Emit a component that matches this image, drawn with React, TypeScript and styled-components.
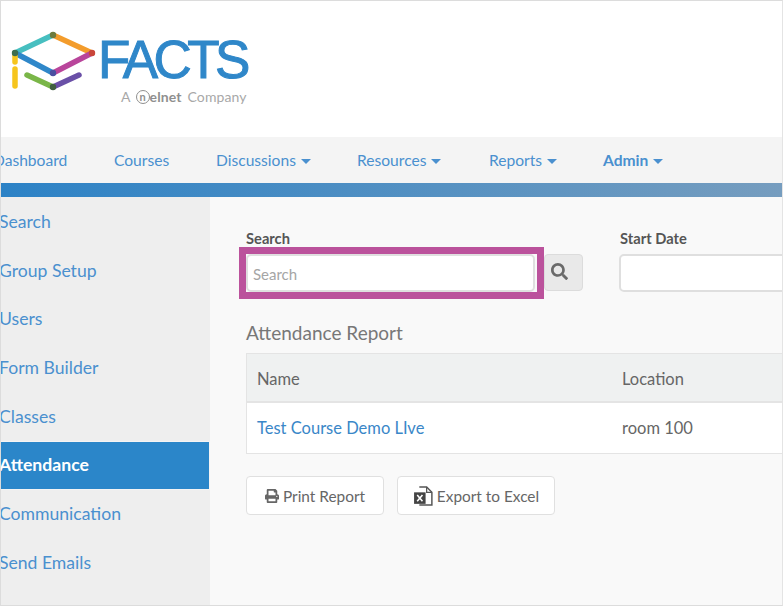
import React from 'react';
import styled, { createGlobalStyle } from 'styled-components';
import { FaPrint, FaSearch } from 'react-icons/fa';

const Global = createGlobalStyle`
  html, body {
    margin: 0;
    padding: 0;
    background: #fff;
  }
  * {
    box-sizing: border-box;
  }
`;

const Page = styled.div`
  width: 783px;
  height: 606px;
  overflow: hidden;
  display: flex;
  flex-direction: column;
  font-family: Lato, "Open Sans", sans-serif;
  border-top: 1px solid #dcdcdc;
  border-left: 1px solid #dcdcdc;
  border-right: 1px solid #e4e4e4;
  border-bottom: 1px solid #dcdcdc;
  color: #666;
`;

const LogoBar = styled.header`
  height: 136px;
  flex: none;
  background: #fff;
  display: flex;
  align-items: flex-start;
  padding: 29px 0 0 10px;
`;

const LogoMark = styled.svg`
  width: 88px;
  height: 60px;
  flex: none;
  margin-top: 1px;
`;

const LogoWords = styled.div`
  display: flex;
  flex-direction: column;
  margin-left: -1px;
`;

const Wordmark = styled.div`
  font-family: "Liberation Sans", Arial, sans-serif;
  font-size: 53px;
  line-height: 56px;
  height: 56px;
  letter-spacing: -4.6px;
  color: #2f87c9;
  -webkit-text-stroke: 1px #2f87c9;
  margin-top: 2px;
`;

const Tagline = styled.div`
  font-size: 14px;
  line-height: 18px;
  letter-spacing: 0.1px;
  color: #a8a8a8;
  display: flex;
  align-items: center;
  margin: 0 0 0 23px;
  white-space: nowrap;
`;

const NelnetBadge = styled.span`
  width: 14px;
  height: 14px;
  border: 1.5px solid #8f8f8f;
  border-radius: 50%;
  margin: 0 0 0 5px;
  font-size: 11px;
  line-height: 10px;
  font-weight: 700;
  color: #8f8f8f;
  display: flex;
  align-items: center;
  justify-content: center;
`;

const Nelnet = styled.span`
  color: #8f8f8f;
  font-weight: 700;
  margin-right: 6px;
`;

const Nav = styled.nav`
  height: 46px;
  flex: none;
  background: #f4f4f4;
  display: flex;
  align-items: center;
  margin-left: -8px;
`;

const NavItem = styled.a<{ $w: number; $bold?: boolean }>`
  width: ${(p) => p.$w}px;
  flex: none;
  font-size: 15.6px;
  color: #4a90cf;
  font-weight: ${(p) => (p.$bold ? 700 : 400)};
  white-space: nowrap;
`;

const Caret = styled.span`
  display: inline-block;
  margin-left: 5px;
  vertical-align: 2px;
  border-top: 5px solid currentColor;
  border-left: 5px solid transparent;
  border-right: 5px solid transparent;
`;

const BlueBar = styled.div`
  height: 14px;
  flex: none;
  background: linear-gradient(90deg, #2c82c6, #769dbf);
`;

const Body = styled.div`
  flex: 1;
  display: flex;
  min-height: 0;
`;

const Sidebar = styled.aside`
  width: 209px;
  flex: none;
  background: #eeeeee;
  display: flex;
  flex-direction: column;
  padding-top: 1px;
`;

const SideItem = styled.a<{ $active?: boolean }>`
  height: 48.7px;
  flex: none;
  display: flex;
  align-items: center;
  margin-left: -3px;
  padding: 0 0 2px 0;
  font-size: 17.6px;
  color: ${(p) => (p.$active ? '#fff' : '#4a90cf')};
  background: ${(p) => (p.$active ? '#2b86c9' : 'transparent')};
  border: 1px solid ${(p) => (p.$active ? '#f4f4f4' : 'transparent')};
  font-weight: ${(p) => (p.$active ? 700 : 400)};
  white-space: nowrap;
`;

const Main = styled.main`
  flex: 1;
  background: #f9f9f9;
  padding: 32px 0 0 36px;
  min-width: 0;
`;

const Filters = styled.div`
  display: flex;
  width: 700px;
`;

const SearchField = styled.div`
  width: 373px;
  flex: none;
`;

const Label = styled.label`
  display: block;
  font-size: 14.7px;
  line-height: 18px;
  font-weight: 700;
  color: #555;
  margin-bottom: 7px;
`;

const DateLabel = styled(Label)`
  margin-left: 1px;
`;

const InputRow = styled.div`
  display: flex;
  position: relative;
`;

const TextInput = styled.input<{ $w: number }>`
  width: ${(p) => p.$w}px;
  height: 38px;
  border: 2px solid #dfdfdf;
  border-radius: 5px;
  background: #fff;
  padding: 2px 5px 0;
  font-family: inherit;
  font-size: 15px;
  outline: none;
  &::placeholder {
    color: #a5a5a5;
    opacity: 1;
  }
`;

const SearchButton = styled.button`
  width: 39px;
  height: 37px;
  margin-left: 9px;
  border: 1px solid #dcdcdc;
  border-radius: 4px;
  background: #e9e9e9;
  color: #6a6a6a;
  display: flex;
  align-items: center;
  justify-content: center;
  padding: 0 9px 2px 0;
  font-size: 17px;
`;

const Highlight = styled.div`
  position: absolute;
  left: -7px;
  top: -7px;
  width: 305px;
  height: 52px;
  border: 7px solid #bb529c;
  pointer-events: none;
`;

const Heading = styled.h2`
  margin: 29px 0 0;
  font-size: 19px;
  line-height: 24px;
  font-weight: 400;
  color: #777;
`;

const Table = styled.div`
  margin-top: 8px;
  width: 560px;
  border: 1px solid #e4e4e4;
  border-right: 0;
`;

const Row = styled.div<{ $head?: boolean }>`
  display: grid;
  grid-template-columns: 365px 1fr;
  align-items: center;
  height: ${(p) => (p.$head ? 49 : 50)}px;
  padding: ${(p) => (p.$head ? '2px' : '0')} 0 0 10px;
  font-size: 16.5px;
  color: #666;
  background: ${(p) => (p.$head ? '#eff1f1' : '#fff')};
  border-bottom: ${(p) => (p.$head ? '2px solid #e4e4e4' : '0')};
  a {
    color: #3a87c8;
  }
`;

const Actions = styled.div`
  display: flex;
  gap: 13px;
  margin-top: 22px;
`;

const ActionButton = styled.button<{ $w: number; $gap: number }>`
  width: ${(p) => p.$w}px;
  height: 39px;
  border: 1px solid #e0e0e0;
  border-radius: 4px;
  background: #fff;
  color: #666;
  font-family: inherit;
  font-size: 15.4px;
  display: flex;
  align-items: center;
  justify-content: center;
  gap: ${(p) => p.$gap}px;
  padding: 0;
`;

function LogoIcon() {
  return (
    <LogoMark viewBox="0 0 88 60" fill="none" strokeWidth="5.5" strokeLinecap="round">
      <path d="M4 22 L42 4" stroke="#47bfc0" />
      <path d="M42 4 L81 22" stroke="#f39c2c" />
      <path d="M81 22 L42 42" stroke="#b9459b" />
      <path d="M42 42 L4 22" stroke="#2f87c9" />
      <path d="M4 23 V31" stroke="#f6c51d" />
      <path d="M4 38 V55" stroke="#f6c51d" />
      <path d="M16 44 L42 56" stroke="#7ab648" />
      <path d="M42 56 L68 44" stroke="#6a50a7" />
      <circle cx="4" cy="22" r="3.2" fill="#3c6e4f" />
      <circle cx="42" cy="4" r="3.2" fill="#6d7b3e" />
      <circle cx="81" cy="22" r="3.2" fill="#c9463a" />
      <circle cx="42" cy="42" r="3.2" fill="#4a4fa0" />
      <circle cx="42" cy="56" r="3.2" fill="#40603f" />
    </LogoMark>
  );
}

function ExcelIcon() {
  return (
    <svg width="21" height="22" viewBox="0 0 20 21" fill="none">
      <path d="M6 2 H13 L18 7 V19 H6" stroke="#555" strokeWidth="1.4" />
      <path d="M13 2 V7 H18" stroke="#555" strokeWidth="1.2" />
      <rect x="1" y="7" width="11" height="11" fill="#444" />
      <path d="M4 9.5 L9 15.5 M9 9.5 L4 15.5" stroke="#fff" strokeWidth="1.5" />
    </svg>
  );
}

const navItems = [
  { label: 'Dashboard', w: 121 },
  { label: 'Courses', w: 102 },
  { label: 'Discussions', w: 141, caret: true },
  { label: 'Resources', w: 132, caret: true },
  { label: 'Reports', w: 114, caret: true },
  { label: 'Admin', w: 100, caret: true, bold: true },
];

const sideItems = ['Search', 'Group Setup', 'Users', 'Form Builder', 'Classes', 'Attendance', 'Communication', 'Send Emails'];

export default function App() {
  return (
    <Page>
      <Global />
      <LogoBar>
        <LogoIcon />
        <LogoWords>
          <Wordmark>FACTS</Wordmark>
          <Tagline>
            A
            <NelnetBadge>n</NelnetBadge>
            <Nelnet>elnet</Nelnet>
            Company
          </Tagline>
        </LogoWords>
      </LogoBar>
      <Nav>
        {navItems.map((n) => (
          <NavItem key={n.label} $w={n.w} $bold={n.bold}>
            {n.label}
            {n.caret && <Caret />}
          </NavItem>
        ))}
      </Nav>
      <BlueBar />
      <Body>
        <Sidebar>
          {sideItems.map((s) => (
            <SideItem key={s} $active={s === 'Attendance'}>
              {s}
            </SideItem>
          ))}
        </Sidebar>
        <Main>
          <Filters>
            <SearchField>
              <Label>Search</Label>
              <InputRow>
                <TextInput $w={289} placeholder="Search" />
                <SearchButton>
                  <FaSearch />
                </SearchButton>
                <Highlight />
              </InputRow>
            </SearchField>
            <div>
              <DateLabel>Start Date</DateLabel>
              <TextInput $w={200} />
            </div>
          </Filters>
          <Heading>Attendance Report</Heading>
          <Table>
            <Row $head>
              <span>Name</span>
              <span>Location</span>
            </Row>
            <Row>
              <a>Test Course Demo LIve</a>
              <span>room 100</span>
            </Row>
          </Table>
          <Actions>
            <ActionButton $w={138} $gap={4}>
              <FaPrint size={14} />
              Print Report
            </ActionButton>
            <ActionButton $w={158} $gap={3}>
              <ExcelIcon />
              Export to Excel
            </ActionButton>
          </Actions>
        </Main>
      </Body>
    </Page>
  );
}
